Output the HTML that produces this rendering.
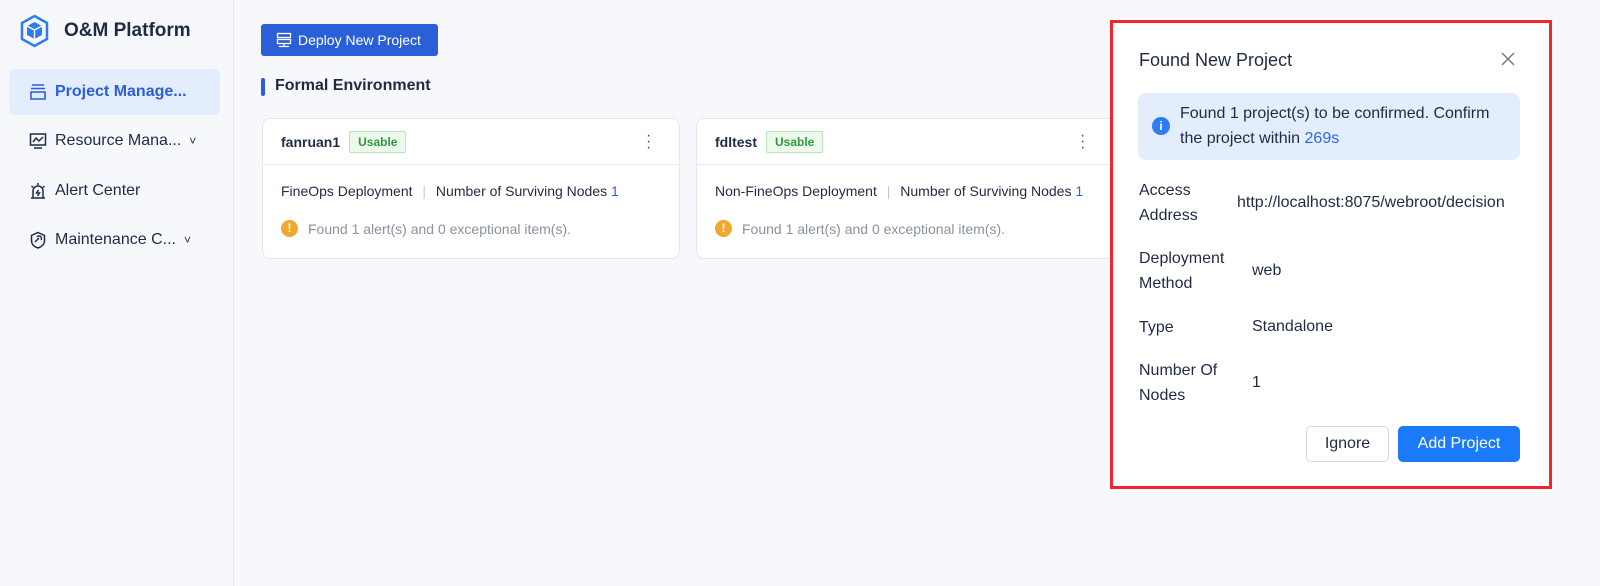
<!DOCTYPE html>
<html><head><meta charset="utf-8"><style>
*{box-sizing:border-box;margin:0;padding:0}
body{width:1600px;height:586px;background:#f6f8fc;font-family:"Liberation Sans",sans-serif;position:relative;overflow:hidden;color:#1f2a44}
.abs{position:absolute}
.side{left:0;top:0;width:234px;height:586px;border-right:1px solid #e4e8ef;background:#f6f8fc}
.nav{position:absolute;left:9px;width:211px;height:46px;display:flex;align-items:center;padding-left:20px;font-size:16px;color:#1f2a44}
.nav svg{margin-right:8px}
.card{background:#fff;border:1px solid #e3e7ee;border-radius:8px;height:141px}
.card .hd{height:46px;border-bottom:1px solid #e8ebf0;display:flex;align-items:center;padding-left:18px;font-weight:bold;font-size:14px}
.tag{margin-left:9px;font-weight:bold;font-size:12px;color:#2f9a3b;background:#eef9ee;border:1px solid #b8e5bb;border-radius:2px;padding:3px 8px}
.l1{position:absolute;left:18px;top:64px;font-size:14px;color:#1f2a44}
.l2{position:absolute;left:18px;top:101px;font-size:14px;color:#8a92a0;display:flex;align-items:center}
.warn{width:17px;height:17px;border-radius:50%;background:#f0a830;color:#fff;font-size:12px;font-weight:bold;text-align:center;line-height:17px;margin-right:10px}
.dots{position:absolute;top:14px;font-size:16px;color:#555;line-height:6px}
.lbl{position:absolute;left:1139px;font-size:16px;color:#1f2a44;line-height:25px}
.val{position:absolute;font-size:16px;color:#1f2a44}
</style></head><body>
<div class="abs side">
 <svg class="abs" style="left:19px;top:14px" width="31" height="34" viewBox="0 0 31 34"><path d="M15.5 2 L28 9 L28 25 L15.5 32 L3 25 L3 9 Z" fill="none" stroke="#2d7cf6" stroke-width="2.5"/><path d="M15.5 8 L23 12 L23 21 L15.5 25 L8 21 L8 12 Z" fill="#2d7cf6"/><path d="M8 12 L15.5 16 L23 12 M15.5 16 V25" stroke="#fff" stroke-width="1.3" fill="none"/></svg>
 <div class="abs" style="left:64px;top:20px;font-size:19px;font-weight:bold;color:#1f2a44">O&amp;M Platform</div>
 <div class="nav" style="top:69px;background:#e3edfd;border-radius:6px;color:#2a5fd8;font-weight:bold;font-size:16px"><svg width="18" height="18" viewBox="0 0 18 18" fill="none" stroke="#2a5fd8" stroke-width="1.6"><path d="M3 2h12M2 5.5h14M2 9h14v7H2z"/></svg>Project Manage...</div>
 <div class="nav" style="top:118px"><svg width="18" height="18" viewBox="0 0 18 18" fill="none" stroke="#1f2a44" stroke-width="1.5"><rect x="1.5" y="2" width="15" height="11"/><path d="M4 10l3-4 3 3 4-4M5 16h8"/></svg>Resource Mana... <span style="margin-left:8px;font-size:12px">&#x2C5;</span></div>
 <div class="nav" style="top:168px"><svg width="18" height="18" viewBox="0 0 18 18" fill="none" stroke="#1f2a44" stroke-width="1.5"><path d="M4 16V9a5 5 0 0110 0v7M2 16h14M9 1v2M2.5 4l1.5 1.5M15.5 4L14 5.5M9.5 8l-2 3h3l-2 3"/></svg>Alert Center</div>
 <div class="nav" style="top:217px"><svg width="18" height="18" viewBox="0 0 18 18" fill="none" stroke="#1f2a44" stroke-width="1.5"><path d="M9 1.5l6.5 3v5c0 4-3 6.5-6.5 7.5C5.5 16 2.5 13.5 2.5 9.5v-5z"/><path d="M6 11l4-4M8 6a2.5 2.5 0 114 3"/></svg>Maintenance C... <span style="margin-left:8px;font-size:12px">&#x2C5;</span></div>
</div>
<div class="abs" style="left:261px;top:24px;width:177px;height:32px;background:#2a5fd8;border-radius:3px;color:#fff;font-size:14px;display:flex;align-items:center;padding-left:15px"><svg width="16" height="16" viewBox="0 0 16 16" fill="none" stroke="#fff" stroke-width="1.3" style="margin-right:6px"><rect x="1.5" y="1.5" width="13" height="4"/><rect x="1.5" y="7.5" width="13" height="4"/><path d="M8 11.5v3M3 14.5h10"/></svg>Deploy New Project</div>
<div class="abs" style="left:261px;top:78px;width:4px;height:18px;background:#2a5fd8;border-radius:2px"></div>
<div class="abs" style="left:275px;top:77px;font-size:16px;font-weight:bold">Formal Environment</div>
<div class="abs card" style="left:262px;top:118px;width:418px">
 <div class="hd">fanruan1<span class="tag">Usable</span></div>
 <div class="dots" style="left:383px">·<br>·<br>·</div>
 <div class="l1">FineOps Deployment <span style="color:#c5cad3;margin:0 6px">|</span> Number of Surviving Nodes <span style="color:#2a5fd8">1</span></div>
 <div class="l2"><span class="warn">!</span>Found 1 alert(s) and 0 exceptional item(s).</div>
</div>
<div class="abs card" style="left:696px;top:118px;width:440px">
 <div class="hd">fdltest<span class="tag">Usable</span></div>
 <div class="dots" style="left:383px">·<br>·<br>·</div>
 <div class="l1">Non-FineOps Deployment <span style="color:#c5cad3;margin:0 6px">|</span> Number of Surviving Nodes <span style="color:#2a5fd8">1</span></div>
 <div class="l2"><span class="warn">!</span>Found 1 alert(s) and 0 exceptional item(s).</div>
</div>
<div class="abs" style="left:1110px;top:20px;width:442px;height:469px;background:#fff;border:3px solid #f0262e"></div>
<div class="abs" style="left:1139px;top:50px;font-size:18px;color:#1f2a44">Found New Project</div>
<svg class="abs" style="left:1501px;top:52px" width="14" height="14" viewBox="0 0 14 14" stroke="#777" stroke-width="1.4"><path d="M1 1l12 12M13 1L1 13"/></svg>
<div class="abs" style="left:1138px;top:93px;width:382px;height:67px;background:#e4edfc;border-radius:8px"></div>
<div class="abs" style="left:1152px;top:117px;width:18px;height:18px;border-radius:50%;background:#2d7cf6;color:#fff;font-size:12px;font-weight:bold;text-align:center;line-height:18px">i</div>
<div class="abs" style="left:1180px;top:101px;font-size:16px;line-height:25px;width:330px">Found 1 project(s) to be confirmed. Confirm the project within <span style="color:#2a6ae8">269s</span></div>
<div class="lbl" style="top:178px">Access<br>Address</div>
<div class="val" style="left:1237px;top:194px">http://localhost:8075/webroot/decision</div>
<div class="lbl" style="top:246px">Deployment<br>Method</div>
<div class="val" style="left:1252px;top:262px">web</div>
<div class="lbl" style="top:315px">Type</div>
<div class="val" style="left:1252px;top:318px">Standalone</div>
<div class="lbl" style="top:358px">Number Of<br>Nodes</div>
<div class="val" style="left:1252px;top:374px">1</div>
<div class="abs" style="left:1306px;top:426px;width:83px;height:36px;border:1px solid #d4d8de;border-radius:5px;font-size:16px;text-align:center;line-height:34px">Ignore</div>
<div class="abs" style="left:1398px;top:426px;width:122px;height:36px;background:#1a7af8;border-radius:5px;color:#fff;font-size:16px;text-align:center;line-height:36px">Add Project</div>
</body></html>
